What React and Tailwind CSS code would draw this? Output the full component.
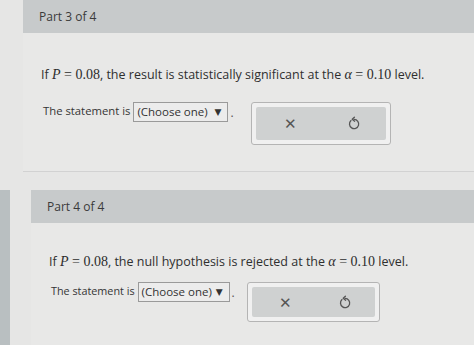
import React from 'react';

const sans = { fontFamily: '"Open Sans", "DejaVu Sans", sans-serif' };

function Math({ children }) {
  return <span className="text-[14px] text-[#2c2c2c]" style={{ fontFamily: '"Liberation Serif", serif' }}>{children}</span>;
}

function UndoIcon() {
  return (
    <svg width="14" height="15" viewBox="0 0 14 15" fill="none" stroke="#555" strokeWidth="1.3" strokeLinecap="round" strokeLinejoin="round">
      <path d="M4 4.6 A4.6 4.6 0 1 0 7.2 3.4" />
      <path d="M7.4 1.2 L5.2 3.3 L7.6 5.2" />
    </svg>
  );
}

function Part({ title, line, pad, selW, btnW, btnH, lineTop, rowTop, stmtSize, btnMl }) {
  return (
    <div className="flex flex-col">
      <div className="h-[33px] bg-[#c7cacb] flex items-center text-[12px] text-[#3a3a3a]" style={{ paddingLeft: pad }}>
        {title}
      </div>
      <div className="h-[139px] bg-[#e8e8e7] border-b border-[#d2d2d2] flex flex-col" style={{ paddingLeft: pad + 2 }}>
        <div className="text-[12.5px] text-[#2f2f2f] whitespace-nowrap" style={{ marginTop: lineTop }}>{line}</div>
        <div className="flex items-start" style={{ marginTop: rowTop }}>
          <span className="text-[#353535] mt-[1px] ml-[2px]" style={{ fontSize: stmtSize }}>The statement is</span>
          <span className="ml-[3px] border border-[#9a9a9a] bg-[#ececec] h-[20px] flex items-center px-[3px] text-[11.5px] text-[#333]" style={{ width: selW }}>
            (Choose one)
            <span className="ml-auto mr-[3px] text-[9px] text-[#333]">▼</span>
          </span>
          <span className="text-[12px] text-[#555] mt-[2px] ml-[2px]">.</span>
          <div className="border border-[#b4b4b4] rounded-[3px] bg-[#f0f0f0] p-[4px]" style={{ width: btnW, height: btnH, marginLeft: btnMl }}>
            <div className="w-full h-full bg-[#cfd1d1] rounded-[2px] flex items-center justify-around pl-[4px]">
              <span className="text-[15px] text-[#555] font-light leading-none">✕</span>
              <UndoIcon />
            </div>
          </div>
        </div>
      </div>
    </div>
  );
}

export default function App() {
  return (
    <div className="w-[474px] h-[345px] overflow-hidden bg-[#e6e6e5]" style={sans}>
      <div className="ml-[23px]">
        <Part
          title="Part 3 of 4"
          pad={16}
          selW={95}
          btnW={140}
          btnH={43}
          lineTop={31}
          rowTop={17}
          stmtSize={11.3}
          btnMl={17}
          line={<>If <Math><i>P</i> = 0.08</Math>, the result is statistically significant at the <Math><i>α</i> = 0.10</Math> level.</>}
        />
      </div>
      <div className="flex mt-[18px]">
        <div className="w-[10px] bg-[#b9bfc1] h-[200px] mr-[21px]"></div>
        <div className="flex-1">
          <Part
            title="Part 4 of 4"
            pad={16}
            selW={92}
            btnW={133}
            btnH={40}
            lineTop={28}
            rowTop={10}
            stmtSize={10.8}
            btnMl={12}
            line={<>If <Math><i>P</i> = 0.08</Math>, the null hypothesis is rejected at the <Math><i>α</i> = 0.10</Math> level.</>}
          />
        </div>
      </div>
    </div>
  );
}
